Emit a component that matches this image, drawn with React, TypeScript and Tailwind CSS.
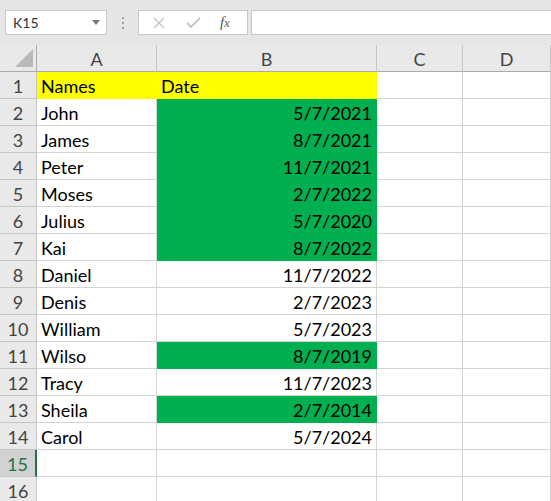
import React from 'react';

const rows: { name: string; date: string; green: boolean }[] = [
  { name: 'John', date: '5/7/2021', green: true },
  { name: 'James', date: '8/7/2021', green: true },
  { name: 'Peter', date: '11/7/2021', green: true },
  { name: 'Moses', date: '2/7/2022', green: true },
  { name: 'Julius', date: '5/7/2020', green: true },
  { name: 'Kai', date: '8/7/2022', green: true },
  { name: 'Daniel', date: '11/7/2022', green: false },
  { name: 'Denis', date: '2/7/2023', green: false },
  { name: 'William', date: '5/7/2023', green: false },
  { name: 'Wilso', date: '8/7/2019', green: true },
  { name: 'Tracy', date: '11/7/2023', green: false },
  { name: 'Sheila', date: '2/7/2014', green: true },
  { name: 'Carol', date: '5/7/2024', green: false },
];

const cell = 'h-[27px] border-r border-b border-[#d4d4d4] flex items-end leading-[23px] overflow-hidden whitespace-nowrap';
const greenCell = 'h-[27px] border-r border-b border-[#00b050] bg-[#00b050] flex items-end leading-[23px] justify-end pr-[4px] overflow-hidden whitespace-nowrap';
const rowHead = 'h-[27px] border-r border-b border-[#c6c6c6] bg-[#e9e9e9] flex items-end leading-[23px] justify-center text-[#444]';

const App: React.FC = () => {
  return (
    <div className="w-[551px] h-[501px] overflow-hidden bg-white text-[18px] text-black" style={{ fontFamily: 'Lato, "Open Sans", sans-serif' }}>
      {/* formula bar */}
      <div className="h-[45px] bg-[#e6e6e6] flex items-start pt-[10px] pl-[5px]">
        <div className="w-[102px] h-[25px] bg-white border border-[#c6c6c6] flex items-center justify-between pl-[7px] pr-[6px] text-[14px] text-[#333]">
          <span>K15</span>
          <svg width="8" height="5" viewBox="0 0 8 5"><path d="M0 0h8L4 5z" fill="#777" /></svg>
        </div>
        <div className="w-[31px] h-[25px] flex flex-col items-center justify-center gap-[3px]">
          <span className="w-[2px] h-[2px] bg-[#a0a0a0]" />
          <span className="w-[2px] h-[2px] bg-[#a0a0a0]" />
          <span className="w-[2px] h-[2px] bg-[#a0a0a0]" />
        </div>
        <div className="w-[110px] h-[25px] bg-white border border-[#c6c6c6] flex items-center pl-[14px]">
          <svg width="12" height="12" viewBox="0 0 12 12"><path d="M1 1l10 10M11 1L1 11" stroke="#c4c4c4" strokeWidth="1.4" /></svg>
          <svg className="ml-[21px]" width="15" height="12" viewBox="0 0 15 12"><path d="M1 6l4 4 9-9" stroke="#c4c4c4" strokeWidth="1.8" fill="none" /></svg>
          <span className="ml-[19px] text-[15px] italic text-[#555]" style={{ fontFamily: '"Liberation Serif", serif' }}>f<span className="text-[12px]">x</span></span>
        </div>
        <div className="ml-[3px] flex-1 h-[25px] bg-white border-y border-l border-[#c6c6c6]" />
      </div>

      {/* grid */}
      <div className="grid grid-cols-[37px_120px_220px_86px_88px]">
        <div className="h-[27px] border-r border-b border-[#ababab] bg-[#e9e9e9] flex items-end justify-end pr-[3px] pb-[4px]">
          <svg width="18" height="18" viewBox="0 0 18 18"><path d="M18 0V18H0z" fill="#b9b9b9" /></svg>
        </div>
        {['A', 'B', 'C', 'D'].map(c => (
          <div key={c} className="h-[27px] border-r border-b border-r-[#c6c6c6] border-b-[#ababab] bg-[#e9e9e9] flex items-end leading-[24px] justify-center text-[#444]">
            {c}
          </div>
        ))}

        <div className={rowHead}>1</div>
        <div className="h-[27px] border-b border-[#ffff00] bg-[#ffff00] flex items-end leading-[23px] pl-[4px]">Names</div>
        <div className="h-[27px] border-r border-b border-[#ffff00] bg-[#ffff00] flex items-end leading-[23px] pl-[4px]">Date</div>
        <div className={cell} />
        <div className={cell} />

        {rows.map((r, i) => (
          <React.Fragment key={i}>
            <div className={rowHead}>{i + 2}</div>
            <div className={`${cell} pl-[4px]`}>{r.name}</div>
            {r.green ? (
              <div className={greenCell}>{r.date}</div>
            ) : (
              <div className={`${cell} justify-end pr-[4px]`}>{r.date}</div>
            )}
            <div className={cell} />
            <div className={cell} />
          </React.Fragment>
        ))}

        <div className="h-[27px] border-r-2 border-b border-r-[#217346] border-b-[#c6c6c6] bg-[#d2d2d2] flex items-end leading-[23px] justify-center text-[#217346]">15</div>
        <div className={cell} />
        <div className={cell} />
        <div className={cell} />
        <div className={cell} />

        <div className={rowHead}>16</div>
        <div className={cell} />
        <div className={cell} />
        <div className={cell} />
        <div className={cell} />
      </div>
    </div>
  );
};

export default App;
